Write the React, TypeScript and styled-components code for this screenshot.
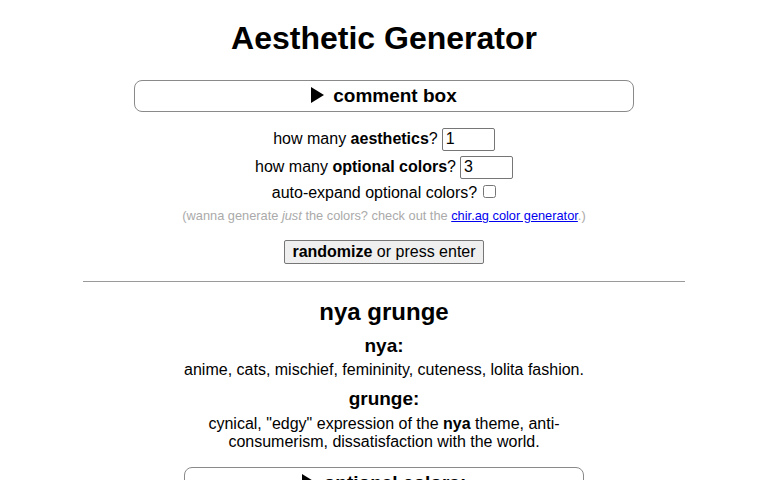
import React from 'react'
import styled, {createGlobalStyle} from 'styled-components'

const Global = createGlobalStyle`
  body {
    margin: 8px;
    background: #fff;
    color: #000;
    font-family: "Liberation Sans", Arial, sans-serif;
  }
`

const Page = styled.div`
  display: flex;
  flex-direction: column;
  align-items: center;
  text-align: center;
`

const Title = styled.h1`
  font-size: 32px;
  font-weight: bold;
  margin: 12px 0 23px;
  line-height: 37px;
`

const Drawer = styled.details<{$width: number}>`
  width: ${_ => _.$width}px;
  box-sizing: border-box;
  border: 1px solid #8a8a8a;
  border-radius: 8px;
`

const DrawerLabel = styled.summary`
  font-size: 19px;
  font-weight: bold;
  line-height: 30px;
  cursor: pointer;
  list-style: none;
  &::-webkit-details-marker { display: none; }
  &::before {
    content: "";
    display: inline-block;
    border-left: 13px solid #000;
    border-top: 8px solid transparent;
    border-bottom: 8px solid transparent;
    margin-right: 9px;
    vertical-align: -1px;
  }
`

const Form = styled.div`
  margin-top: 13px;
  display: flex;
  flex-direction: column;
  align-items: center;
  font-size: 16px;
`

const Row = styled.label<{$h: number}>`
  display: flex;
  align-items: center;
  height: ${_ => _.$h}px;
  gap: 4px;
`

const NumberBox = styled.input`
  width: 53px;
  height: 23px;
  box-sizing: border-box;
  font: 16px "Liberation Sans", Arial, sans-serif;
  padding: 1px 3px;
  border: 1px solid #767676;
  border-radius: 2px;
  margin: 0;
`

const Check = styled.input`
  width: 13px;
  height: 13px;
  margin: 0 0 2px 2px;
`

const Hint = styled.p`
  margin: 4px 0 0;
  font-size: 12.8px;
  line-height: 16px;
  color: #aaaaaa;
  a { color: #0000ee; }
`

const Go = styled.button`
  margin-top: 16px;
  height: 24px;
  padding: 0 7px;
  font: 16px "Liberation Sans", Arial, sans-serif;
  color: #000;
  background: #efefef;
  border: 1px solid #767676;
  border-radius: 2px;
`

const Rule = styled.hr`
  width: 80%;
  margin: 17px 0 0;
  border: none;
  border-top: 1px solid #9a9a9a;
`

const Name = styled.h2`
  font-size: 24px;
  font-weight: bold;
  margin: 16px 0 0;
  line-height: 28px;
`

const Part = styled.h3`
  font-size: 19px;
  font-weight: bold;
  margin: 9px 0 0;
  line-height: 22px;
`

const About = styled.p<{$top: number}>`
  width: 400px;
  margin: ${_ => _.$top}px 0 0;
  font-size: 16px;
  line-height: 18px;
`

const Gap = styled.div`
  height: 16px;
`

export default function App() {
  return (
    <Page>
      <Global />
      <Title>Aesthetic Generator</Title>
      <Drawer $width={500}>
        <DrawerLabel>comment box</DrawerLabel>
      </Drawer>
      <Form>
        <Row $h={28}>
          <span>how many <b>aesthetics</b>?</span>
          <NumberBox type="text" defaultValue="1" />
        </Row>
        <Row $h={28}>
          <span>how many <b>optional colors</b>?</span>
          <NumberBox type="text" defaultValue="3" />
        </Row>
        <Row $h={23}>
          <span>auto-expand optional colors?</span>
          <Check type="checkbox" />
        </Row>
        <Hint>
          (wanna generate <i>just</i> the colors? check out the <a href="#">chir.ag color generator</a>.)
        </Hint>
        <Go><b>randomize</b> or press enter</Go>
      </Form>
      <Rule />
      <Name>nya grunge</Name>
      <Part>nya:</Part>
      <About $top={4}>anime, cats, mischief, femininity, cuteness, lolita fashion.</About>
      <Part>grunge:</Part>
      <About $top={5}>cynical, "edgy" expression of the <b>nya</b> theme, anti-consumerism, dissatisfaction with the world.</About>
      <Gap />
      <Drawer $width={400}>
        <DrawerLabel>optional colors:</DrawerLabel>
      </Drawer>
    </Page>
  )
}
